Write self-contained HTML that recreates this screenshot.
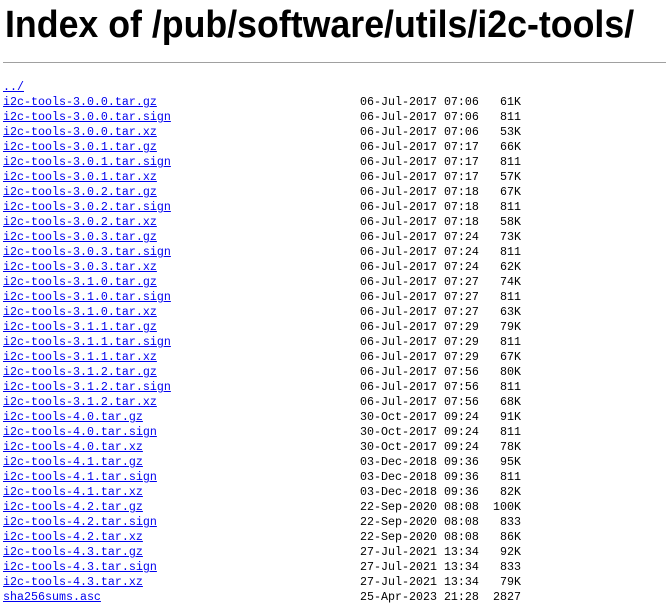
<!DOCTYPE html>
<html><head><meta charset="utf-8"><style>
html,body{margin:0;padding:0;background:#fff;width:666px;height:612px;overflow:hidden;position:relative}
h1{position:absolute;left:5px;top:3px;margin:0;font:bold 38px/44px "Liberation Sans",sans-serif;color:#000;white-space:nowrap;transform-origin:0 0;transform:scaleX(0.94)}
.hr{position:absolute;left:3px;top:62px;width:663px;height:1px;background:#a0a0a0}
pre{position:absolute;left:3px;top:80px;margin:0;font:11.67px/15px "Liberation Mono",monospace;color:#000}
a{color:#0000ee;text-decoration:underline}
.n{display:inline-block;width:357px}
.d{display:inline-block;width:119px}
.s{display:inline-block;width:42px;text-align:right}
</style></head><body>
<h1>Index of /pub/software/utils/i2c-tools/</h1>
<div class="hr"></div>
<pre><a href="#">../</a>
<span class="n"><a href="#">i2c-tools-3.0.0.tar.gz</a></span><span class="d">06-Jul-2017 07:06</span><span class="s">61K</span>
<span class="n"><a href="#">i2c-tools-3.0.0.tar.sign</a></span><span class="d">06-Jul-2017 07:06</span><span class="s">811</span>
<span class="n"><a href="#">i2c-tools-3.0.0.tar.xz</a></span><span class="d">06-Jul-2017 07:06</span><span class="s">53K</span>
<span class="n"><a href="#">i2c-tools-3.0.1.tar.gz</a></span><span class="d">06-Jul-2017 07:17</span><span class="s">66K</span>
<span class="n"><a href="#">i2c-tools-3.0.1.tar.sign</a></span><span class="d">06-Jul-2017 07:17</span><span class="s">811</span>
<span class="n"><a href="#">i2c-tools-3.0.1.tar.xz</a></span><span class="d">06-Jul-2017 07:17</span><span class="s">57K</span>
<span class="n"><a href="#">i2c-tools-3.0.2.tar.gz</a></span><span class="d">06-Jul-2017 07:18</span><span class="s">67K</span>
<span class="n"><a href="#">i2c-tools-3.0.2.tar.sign</a></span><span class="d">06-Jul-2017 07:18</span><span class="s">811</span>
<span class="n"><a href="#">i2c-tools-3.0.2.tar.xz</a></span><span class="d">06-Jul-2017 07:18</span><span class="s">58K</span>
<span class="n"><a href="#">i2c-tools-3.0.3.tar.gz</a></span><span class="d">06-Jul-2017 07:24</span><span class="s">73K</span>
<span class="n"><a href="#">i2c-tools-3.0.3.tar.sign</a></span><span class="d">06-Jul-2017 07:24</span><span class="s">811</span>
<span class="n"><a href="#">i2c-tools-3.0.3.tar.xz</a></span><span class="d">06-Jul-2017 07:24</span><span class="s">62K</span>
<span class="n"><a href="#">i2c-tools-3.1.0.tar.gz</a></span><span class="d">06-Jul-2017 07:27</span><span class="s">74K</span>
<span class="n"><a href="#">i2c-tools-3.1.0.tar.sign</a></span><span class="d">06-Jul-2017 07:27</span><span class="s">811</span>
<span class="n"><a href="#">i2c-tools-3.1.0.tar.xz</a></span><span class="d">06-Jul-2017 07:27</span><span class="s">63K</span>
<span class="n"><a href="#">i2c-tools-3.1.1.tar.gz</a></span><span class="d">06-Jul-2017 07:29</span><span class="s">79K</span>
<span class="n"><a href="#">i2c-tools-3.1.1.tar.sign</a></span><span class="d">06-Jul-2017 07:29</span><span class="s">811</span>
<span class="n"><a href="#">i2c-tools-3.1.1.tar.xz</a></span><span class="d">06-Jul-2017 07:29</span><span class="s">67K</span>
<span class="n"><a href="#">i2c-tools-3.1.2.tar.gz</a></span><span class="d">06-Jul-2017 07:56</span><span class="s">80K</span>
<span class="n"><a href="#">i2c-tools-3.1.2.tar.sign</a></span><span class="d">06-Jul-2017 07:56</span><span class="s">811</span>
<span class="n"><a href="#">i2c-tools-3.1.2.tar.xz</a></span><span class="d">06-Jul-2017 07:56</span><span class="s">68K</span>
<span class="n"><a href="#">i2c-tools-4.0.tar.gz</a></span><span class="d">30-Oct-2017 09:24</span><span class="s">91K</span>
<span class="n"><a href="#">i2c-tools-4.0.tar.sign</a></span><span class="d">30-Oct-2017 09:24</span><span class="s">811</span>
<span class="n"><a href="#">i2c-tools-4.0.tar.xz</a></span><span class="d">30-Oct-2017 09:24</span><span class="s">78K</span>
<span class="n"><a href="#">i2c-tools-4.1.tar.gz</a></span><span class="d">03-Dec-2018 09:36</span><span class="s">95K</span>
<span class="n"><a href="#">i2c-tools-4.1.tar.sign</a></span><span class="d">03-Dec-2018 09:36</span><span class="s">811</span>
<span class="n"><a href="#">i2c-tools-4.1.tar.xz</a></span><span class="d">03-Dec-2018 09:36</span><span class="s">82K</span>
<span class="n"><a href="#">i2c-tools-4.2.tar.gz</a></span><span class="d">22-Sep-2020 08:08</span><span class="s">100K</span>
<span class="n"><a href="#">i2c-tools-4.2.tar.sign</a></span><span class="d">22-Sep-2020 08:08</span><span class="s">833</span>
<span class="n"><a href="#">i2c-tools-4.2.tar.xz</a></span><span class="d">22-Sep-2020 08:08</span><span class="s">86K</span>
<span class="n"><a href="#">i2c-tools-4.3.tar.gz</a></span><span class="d">27-Jul-2021 13:34</span><span class="s">92K</span>
<span class="n"><a href="#">i2c-tools-4.3.tar.sign</a></span><span class="d">27-Jul-2021 13:34</span><span class="s">833</span>
<span class="n"><a href="#">i2c-tools-4.3.tar.xz</a></span><span class="d">27-Jul-2021 13:34</span><span class="s">79K</span>
<span class="n"><a href="#">sha256sums.asc</a></span><span class="d">25-Apr-2023 21:28</span><span class="s">2827</span>
</pre>
</body></html>
